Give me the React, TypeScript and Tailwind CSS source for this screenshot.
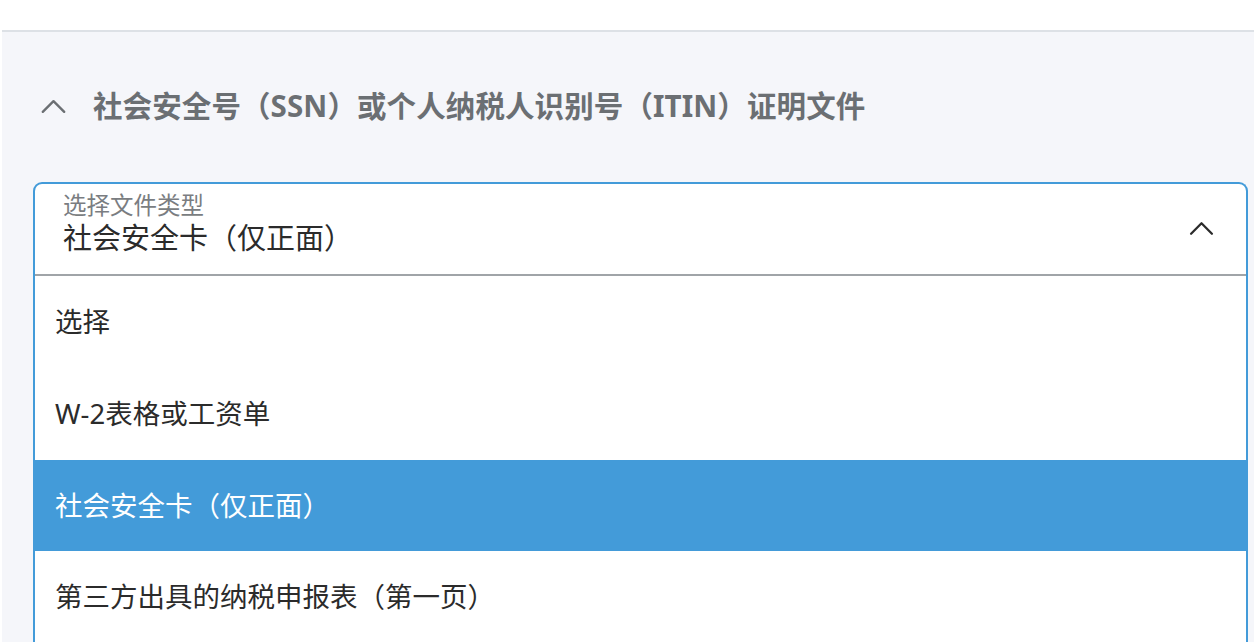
import { useState } from 'react';

const FONT = { fontFamily: '"Noto Sans", "Noto Sans CJK SC", sans-serif' };

const OPTIONS = ['选择', 'W-2表格或工资单', '社会安全卡（仅正面）', '第三方出具的纳税申报表（第一页）'];

function ChevronUp({ className }: { className?: string }) {
  return (
    <svg viewBox="0 0 24 14" className={className} fill="none" stroke="currentColor" strokeWidth={2.2} strokeLinecap="round" strokeLinejoin="round">
      <path d="M2 12 L12 2 L22 12" />
    </svg>
  );
}

export default function App() {
  const [selected, setSelected] = useState(2);

  return (
    <div className="w-[1254px] h-[642px] overflow-hidden bg-white flex flex-col" style={FONT}>
      <div className="h-[30px] shrink-0 bg-white" />
      <div className="flex-1 ml-[2px] bg-[#f5f6fa] border-t-2 border-[#dde1e6] flex flex-col">
        {/* Section header */}
        <div className="flex items-center h-[150px] pl-[37px] pb-[2px]">
          <ChevronUp className="w-[29px] h-[15px] text-[#6b6f73] mr-[25px]" />
          <h2 className="text-[29.5px] font-bold text-[#6b6f73] leading-none tracking-[0.1px]">
            社会安全号（SSN）或个人纳税人识别号（ITIN）证明文件
          </h2>
        </div>

        {/* Select */}
        <div className="ml-[31px] mr-[6px] flex-1 bg-white border-2 border-b-0 border-[#439bd9] rounded-t-[9px] flex flex-col">
          <div className="h-[92px] flex border-b-2 border-[#a0a4a8] pl-[28px] pr-[32px]">
            <div className="flex-1 flex flex-col pt-[9px]">
              <span className="text-[23.5px] text-[#7a7d81] leading-[24px]">选择文件类型</span>
              <span className="text-[29px] text-[#2b2b2b] leading-[32px] mt-[5px]">
                {OPTIONS[selected]}
              </span>
            </div>
            <ChevronUp className="self-center w-[25px] h-[15px] text-[#2b2b2b] mt-[-2px]" />
          </div>
          <ul className="flex flex-col">
            {OPTIONS.map((opt, i) => (
              <li
                key={opt}
                onClick={() => setSelected(i)}
                className={
                  i === selected
                    ? 'h-[91px] flex items-center pl-[20px] text-[27.5px] bg-[#439bd9] text-white cursor-pointer'
                    : 'h-[92px] flex items-center pl-[20px] text-[27.5px] text-[#2b2b2b] cursor-pointer'
                }
              >
                {opt}
              </li>
            ))}
          </ul>
        </div>
      </div>
    </div>
  );
}
